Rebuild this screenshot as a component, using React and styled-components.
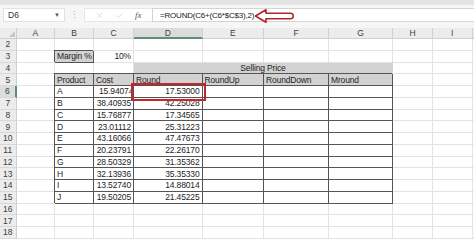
import React from 'react'
import styled, { createGlobalStyle, css } from 'styled-components'
import { X, Check } from 'lucide-react'

const Global = createGlobalStyle`
  html, body { margin: 0; padding: 0; background: #fff; }
  body { font-family: "Liberation Sans", Arial, sans-serif; overflow: hidden; }
`

const Sheet = styled.div`
  width: 474px;
  height: 241px;
  display: flex;
  flex-direction: column;
  background: #fff;
  overflow: hidden;
`

const TopStrip = styled.div`
  height: 5px;
  background: #e4e4e4;
`

const FormulaBar = styled.div`
  position: relative;
  height: 23px;
  box-sizing: border-box;
  padding: 3px 0 6px 3px;
  display: flex;
  align-items: stretch;
  background: #f6f6f6;
`

const NameBox = styled.div`
  width: 62px;
  box-sizing: border-box;
  background: #fff;
  border: 1px solid #e2e2e2;
  display: flex;
  align-items: center;
  justify-content: space-between;
  padding: 0 4px 0 4px;
  font-size: 8.5px;
  color: #333;
`

const Caret = styled.span`
  font-size: 6px;
  color: #555;
`

const Dots = styled.div`
  width: 19px;
  display: flex;
  align-items: center;
  justify-content: center;
  color: #b5b5b5;
  font-size: 9px;
`

const Tools = styled.div`
  width: 68px;
  display: flex;
  align-items: center;
  gap: 11px;
  padding-left: 10px;
  box-sizing: border-box;
  background: #fff;
  border: 1px solid #e6e6e6;
  border-right: none;
  color: #b8b8b8;
`

const Fx = styled.span`
  font-family: "Liberation Serif", serif;
  font-style: italic;
  font-size: 9px;
  color: #555;
`

const FormulaInput = styled.div`
  flex: 1;
  background: #fff;
  border: 1px solid #d4d4d4;
  border-right: none;
  display: flex;
  align-items: center;
  padding-left: 7px;
  font-size: 8px;
  letter-spacing: -0.2px;
  color: #222;
  white-space: nowrap;
`

const Arrow = styled.svg`
  position: absolute;
  left: 254px;
  top: 3px;
`

const Grid = styled.div`
  display: grid;
  grid-template-columns: 16.5px 38.5px 39px 40px 68.5px 61.5px 65px 64px 40px 39.5px 1fr;
  grid-template-rows: 11px repeat(17, 11.75px);
`

const Corner = styled.div`
  position: relative;
  background: #ececec;
  border-right: 1px solid #cfcfcf;
  border-bottom: 1px solid #cfcfcf;
  box-sizing: border-box;
  &::after {
    content: '';
    position: absolute;
    right: 1px;
    bottom: 1px;
    border-left: 6px solid transparent;
    border-bottom: 6px solid #c6c6c6;
  }
`

const ColHead = styled.div`
  box-sizing: border-box;
  background: ${p => (p.$active ? '#dcdcdc' : '#ececec')};
  border-right: 1px solid #d0d0d0;
  border-bottom: ${p => (p.$active ? '2px solid #5f8f73' : '1px solid #cfcfcf')};
  display: flex;
  align-items: center;
  justify-content: center;
  font-size: 8.5px;
  color: ${p => (p.$active ? '#2b4f3b' : '#3c3c3c')};
`

const RowHead = styled.div`
  box-sizing: border-box;
  background: ${p => (p.$active ? '#dcdcdc' : '#ececec')};
  border-right: ${p => (p.$active ? '2px solid #5f8f73' : '1px solid #cfcfcf')};
  border-bottom: 1px solid #d8d8d8;
  display: flex;
  align-items: center;
  justify-content: center;
  font-size: 8.5px;
  color: ${p => (p.$active ? '#2b4f3b' : '#3c3c3c')};
`

const Cell = styled.div`
  box-sizing: border-box;
  position: relative;
  min-width: 0;
  background: ${p => (p.$fill ? '#d2d2d2' : '#fff')};
  border-right: 1px solid #e3e3e3;
  border-bottom: 1px solid #e3e3e3;
  display: flex;
  align-items: center;
  justify-content: ${p => p.$align || 'flex-start'};
  padding: 0 2px;
  font-size: 8.5px;
  letter-spacing: -0.15px;
  color: #1e1e1e;
  white-space: nowrap;
  overflow: hidden;
  grid-column: ${p => (p.$span ? `span ${p.$span}` : 'auto')};
  ${p =>
    p.$boxed &&
    css`
      border-right-color: #555;
      border-bottom-color: #555;
      box-shadow: -1px -1px 0 #555;
    `}
  ${p =>
    p.$noBorder &&
    css`
      border-right-color: transparent;
      border-bottom-color: transparent;
    `}
  ${p =>
    p.$selected &&
    css`
      outline: 2px solid #c4262e;
      outline-offset: 1px;
      z-index: 2;
    `}
`

const cols = ['A', 'B', 'C', 'D', 'E', 'F', 'G', 'H', 'I', '']

const products = ['A', 'B', 'C', 'D', 'E', 'F', 'G', 'H', 'I', 'J']
const costs = ['15.94074', '38.40935', '15.76877', '23.01112', '43.16066', '20.23791', '28.50329', '32.13936', '13.52740', '19.50205']
const rounds = ['17.53000', '42.25028', '17.34565', '25.31223', '47.47673', '22.26170', '31.35362', '35.35330', '14.88014', '21.45225']

const blanks = n => Array.from({ length: n }, (_, i) => <Cell key={'b' + i} />)

const renderRow = r => {
  const cells = []
  if (r === 3) {
    cells.push(<Cell key="a" />)
    cells.push(<Cell key="b" $fill $boxed>Margin %</Cell>)
    cells.push(<Cell key="c" $align="flex-end">10%</Cell>)
    cells.push(...blanks(7))
  } else if (r === 4) {
    cells.push(...blanks(3))
    cells.push(
      <Cell key="sp" $span={4} $fill $align="center" $noBorder>
        Selling Price
      </Cell>
    )
    cells.push(...blanks(3))
  } else if (r === 5) {
    cells.push(<Cell key="a" />)
    ;['Product', 'Cost', 'Round', 'RoundUp', 'RoundDown', 'Mround'].forEach(h =>
      cells.push(<Cell key={h} $fill $boxed>{h}</Cell>)
    )
    cells.push(...blanks(3))
  } else if (r >= 6 && r <= 15) {
    const i = r - 6
    cells.push(<Cell key="a" />)
    cells.push(<Cell key="p" $boxed>{products[i]}</Cell>)
    cells.push(
      <Cell key="c" $boxed $align={i === 0 ? 'flex-start' : 'flex-end'} style={i === 0 ? { paddingLeft: 5 } : undefined}>
        {costs[i]}
      </Cell>
    )
    cells.push(<Cell key="d" $boxed $align="flex-end" $selected={i === 0}>{rounds[i]}</Cell>)
    cells.push(<Cell key="e" $boxed />)
    cells.push(<Cell key="f" $boxed />)
    cells.push(<Cell key="g" $boxed />)
    cells.push(...blanks(3))
  } else {
    cells.push(...blanks(10))
  }
  return [
    <RowHead key={'h' + r} $active={r === 6}>{r}</RowHead>,
    ...cells.map((c, k) => React.cloneElement(c, { key: r + '-' + k }))
  ]
}

const rows = Array.from({ length: 17 }, (_, i) => i + 2)

export default function App() {
  return (
    <Sheet>
      <Global />
      <TopStrip />
      <FormulaBar>
        <NameBox>
          D6
          <Caret>▼</Caret>
        </NameBox>
        <Dots>⋮</Dots>
        <Tools>
          <X size={9} strokeWidth={1.2} />
          <Check size={9} strokeWidth={1.2} />
          <Fx>fx</Fx>
        </Tools>
        <FormulaInput>=ROUND(C6+(C6*$C$3),2)</FormulaInput>
        <Arrow width="42" height="16" viewBox="0 0 42 16">
          <path
            d="M1.5 8 L12 1.8 L12 5.3 L36.5 5.3 A2.7 2.7 0 0 1 36.5 10.7 L12 10.7 L12 14.2 Z"
            fill="#fff"
            stroke="#b3242a"
            strokeWidth="1.6"
            strokeLinejoin="round"
          />
        </Arrow>
      </FormulaBar>
      <Grid>
        <Corner />
        {cols.map((c, i) => (
          <ColHead key={'c' + i} $active={c === 'D'}>{c}</ColHead>
        ))}
        {rows.map(renderRow)}
      </Grid>
    </Sheet>
  )
}
